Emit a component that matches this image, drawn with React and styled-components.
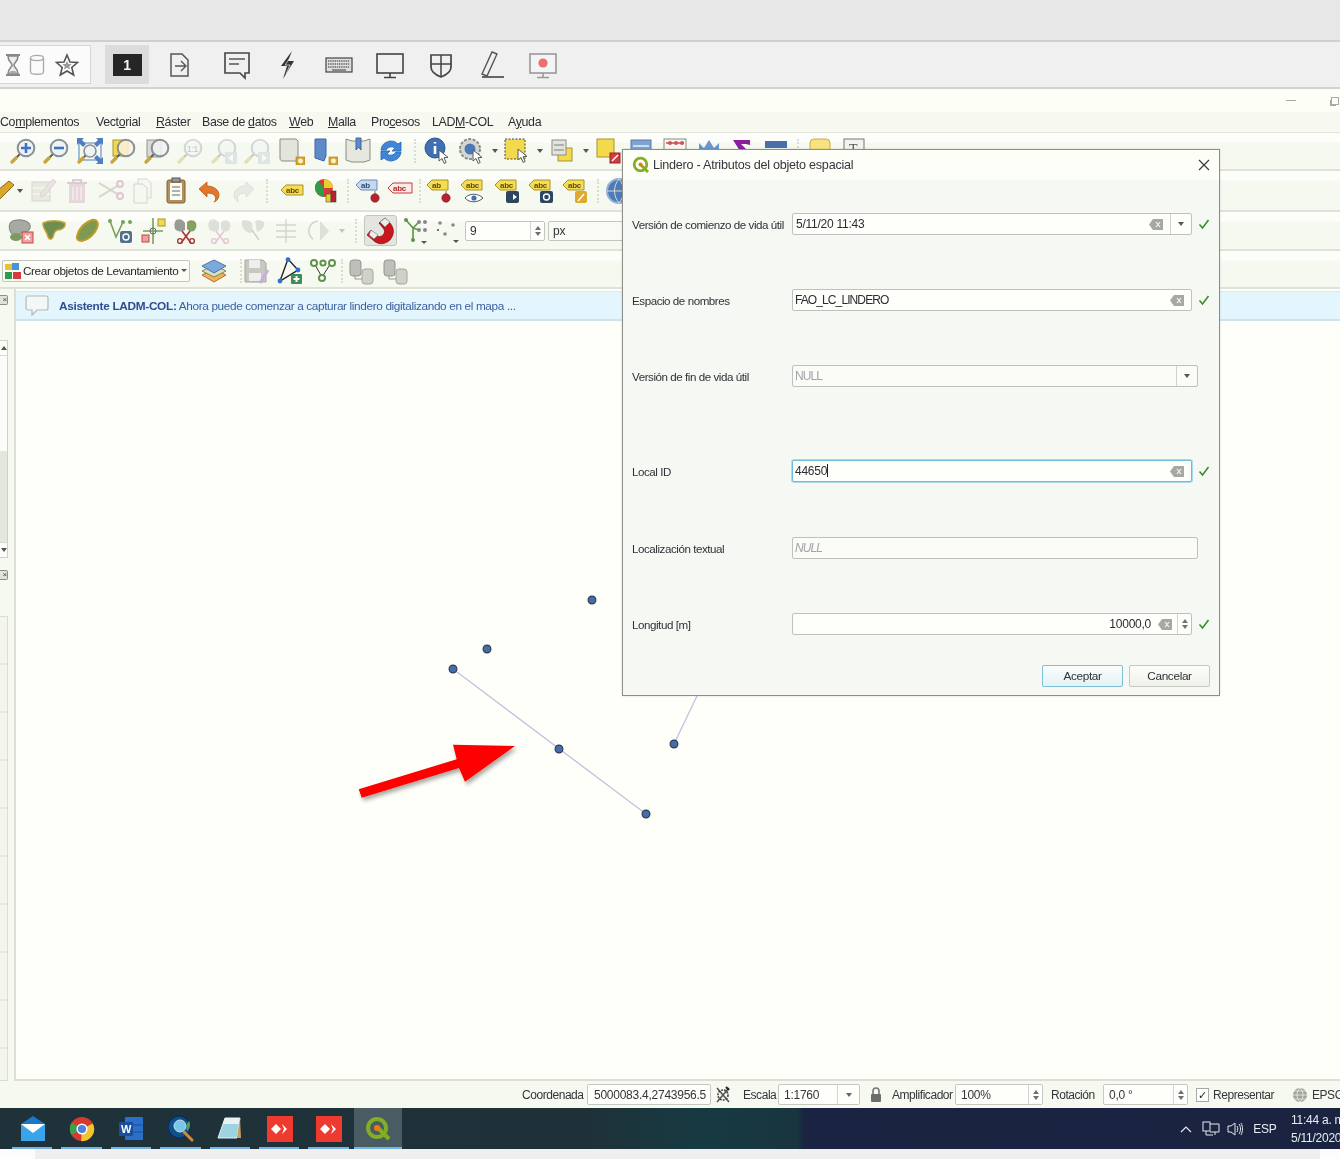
import React from "react";
import styled, { createGlobalStyle } from "styled-components";

const Global = createGlobalStyle`
  html, body { margin: 0; padding: 0; background: #f0f0f0; }
  #root { width: 1340px; height: 1159px; overflow: hidden; }
  * { box-sizing: border-box; }
`;
const FONT = `"Liberation Sans", Arial, sans-serif`;

const Page = styled.div`
  position: relative; width: 1340px; height: 1159px; overflow: hidden;
  display: flex; flex-direction: column; font-family: ${FONT}; font-size: 12px;
  letter-spacing: -0.25px; color: #33363a; background: #fdfef6; filter: blur(0.45px);
`;
const TopStrip = styled.div`height: 42px; flex: none; background: #e7e7e7; border-bottom: 2px solid #cfcfcf;`;
const RemoteBar = styled.div`
  height: 47px; flex: none; background: #f0f0f0; border-bottom: 2px solid #d2d2d2;
  display: flex; align-items: center;
`;
const RemoteGroup = styled.div`
  width: 91px; height: 39px; background: #fbfbfb; border: 1px solid #d6d6d6; border-left: 0;
  display: flex; align-items: center; padding-left: 1px; margin-right: 14px; flex: none;
`;
const ScreenButton = styled.div`
  width: 44px; height: 39px; background: #dcdcdc; flex: none; display: flex; align-items: center; justify-content: center;
`;
const ScreenNumber = styled.div`
  width: 29px; height: 22px; background: #262626; color: #f5f5f5; font: bold 14px ${FONT};
  display: flex; align-items: center; justify-content: center;
`;
const RemoteIcon = styled.div`
  width: ${p => p.$w}px; flex: none; display: flex; align-items: center; justify-content: center;
`;
const WindowBar = styled.div`
  height: 23px; flex: none; display: flex; justify-content: flex-end; align-items: center; color: #aaa; padding-right: 0;
`;
const MinButton = styled.div`width: 10px; height: 1px; background: #a8a8a8; margin-right: 35px;`;
const RestoreButton = styled.div`width: 8px; height: 8px; border: 1px solid #a8a8a8; margin-right: 1px; box-shadow: -2px 2px 0 -1px #a8a8a8;`;
const MenuBar = styled.div`
  height: 21px; flex: none; display: flex; align-items: center; background: #f7f9f0;
  border-bottom: 1px solid #e3e6dc; font-size: 12.4px; letter-spacing: -0.35px; color: #2c2f38;
`;
const MenuItem = styled.span`
  flex: none; width: ${p => p.$w}px; u { text-decoration-thickness: 1px; text-underline-offset: 1px; }
`;
const Toolbar = styled.div`
  height: ${p => p.$h}px; flex: none; display: flex; align-items: center; overflow: hidden;
  padding-left: ${p => p.$pad || 0}px; padding-top: ${p => p.$pt || 0}px;
  background: linear-gradient(#fdfef9 0, #fdfef9 9px, #f6f9f0 10px);
  border-bottom: 2px solid #dfe2d9;
`;
const Slot = styled.div`
  width: ${p => p.$w}px; height: 30px; flex: none; display: flex; align-items: center; justify-content: center;
  opacity: ${p => (p.$dim ? 0.32 : 1)};
`;
const Drop = styled.div`
  width: ${p => p.$w || 12}px; flex: none; display: flex; justify-content: center;
  &::after { content: ""; border-left: 3px solid transparent; border-right: 3px solid transparent; border-top: 4px solid ${p => (p.$dim ? "#c5c5c5" : "#555")}; }
`;
const Sep = styled.div`
  width: ${p => p.$w}px; height: 24px; flex: none; position: relative;
  &::after { content: ""; position: absolute; left: 45%; top: 0; bottom: 0; border-left: 2px dotted #d9dcd3; }
`;
const ActiveSlot = styled.div`
  width: 33px; height: 31px; flex: none; margin: 0 0; border: 1px solid #c4c7bf; border-radius: 3px; background: #e4e5df;
  display: flex; align-items: center; justify-content: center;
`;
const SpinBox = styled.div`
  height: 20px; width: ${p => p.$w}px; flex: none; background: #fefffa; border: 1px solid #c3c6bf; border-radius: 2px;
  display: flex; align-items: center; justify-content: space-between; padding-left: 4px; overflow: hidden; color: #30333a;
`;
const SpinArrows = styled.div`
  width: 14px; height: 100%; flex: none; border-left: 1px solid #d3d5ce; display: flex; flex-direction: column; align-items: center; justify-content: center; gap: 2px;
  &::before { content: ""; border-left: 3px solid transparent; border-right: 3px solid transparent; border-bottom: 4px solid #6e7072; }
  &::after { content: ""; border-left: 3px solid transparent; border-right: 3px solid transparent; border-top: 4px solid #6e7072; }
`;
const PlainField = styled.div`
  height: 20px; width: ${p => p.$w}px; margin-left: ${p => p.$ml || 0}px; flex: none; background: #f8faf3; border: 1px solid #c3c6bf; border-radius: 2px 0 0 2px; padding-left: 4px; display: flex; align-items: center;
`;
const LevantCombo = styled.div`
  width: 188px; height: 22px; margin-left: 2px; flex: none; border: 1px solid #c2c5bd; border-radius: 2px; background: #fbfcf6;
  display: flex; align-items: center; gap: 1px; padding-left: 1px; font-size: 11.8px; letter-spacing: -0.42px; color: #26282e; white-space: nowrap;
  &::after { content: ""; margin-left: 2px; border-left: 3px solid transparent; border-right: 3px solid transparent; border-top: 3px solid #555; }
`;
const Workspace = styled.div`height: 792px; flex: none; position: relative; display: flex;`;
const LeftDock = styled.div`
  width: 16px; flex: none; background: #f6f9f0; border-right: 2px solid #dcdfd7; display: flex; flex-direction: column;
`;
const DockClose = styled.div`
  width: 8px; height: 10px; margin-top: ${p => p.$mt}px; border: 1px solid #8d8d8d; border-left: 0; border-radius: 0 2px 2px 0; background: #e1e1dd;
  flex: none; color: #444; font-size: 8px; line-height: 8px; text-align: right;
`;
const DockScroll = styled.div`
  width: 8px; height: 218px; margin-top: 35px; flex: none; border: 1px solid #cfd2ca; border-left: 0; display: flex; flex-direction: column; background: #fcfdf8;
`;
const ScrollEnd = styled.div`
  height: 14px; flex: none; display: flex; align-items: center; justify-content: center;
  &::after { content: ""; border-left: 3px solid transparent; border-right: 3px solid transparent;
    ${p => (p.$up ? "border-bottom: 4px solid #555;" : "border-top: 4px solid #555;")} }
`;
const ScrollTrack = styled.div`flex: 1; border-top: 1px solid #d5d7d0; border-bottom: 1px solid #d5d7d0; display: flex; flex-direction: column;`;
const ScrollThumb = styled.div`flex: 1; background: #e4e6e0; margin-top: 95px;`;
const DockLower = styled.div`
  width: 8px; flex: 1; margin: 36px 0 0 0; border: 1px solid #dadcd5; border-left: 0;
  background: repeating-linear-gradient(#f3f5ee 0 46px, #e6e8e1 46px 48px);
`;
const MainCol = styled.div`flex: 1; display: flex; flex-direction: column; min-width: 0;`;
const MessageBar = styled.div`
  height: 30px; margin-top: 2px; flex: none; background: #e4f6fd; border-bottom: 2px solid #cfe3ea; border-top: 1px solid #d8ebf2;
  display: flex; align-items: center; padding-left: 9px; gap: 10px; font-size: 11.8px; letter-spacing: -0.36px; color: #3d5f9f;
`;
const Strong = styled.strong`color: #2e4c8f; letter-spacing: -0.3px;`;
const MapCanvas = styled.div`flex: 1; background: #fefff9; border-bottom: 2px solid #dcdfd7;`;
const MapOverlay = styled.svg`position: absolute; left: 0; top: 0; pointer-events: none;`;
const StatusBar = styled.div`
  height: 27px; flex: none; background: #f6f9ef; display: flex; align-items: center; padding-left: 522px; white-space: nowrap; overflow: hidden; color: #33363a; letter-spacing: -0.45px;
`;
const StatusLabel = styled.span`flex: none; width: ${p => p.$w}px; margin-left: ${p => p.$ml || 0}px;`;
const StatusInput = styled.div`
  flex: none; width: ${p => p.$w}px; height: 21px; margin-left: ${p => p.$ml || 0}px; background: #fefffa; border: 1px solid #c6c9c1; border-radius: 2px; letter-spacing: -0.25px;
  display: flex; align-items: center; justify-content: space-between; padding-left: ${p => p.$pl || 5}px; overflow: hidden;
`;
const ComboEnd = styled.div`
  width: 22px; height: 100%; flex: none; border-left: 1px solid #d3d5ce; display: flex; align-items: center; justify-content: center;
  &::after { content: ""; border-left: 3.5px solid transparent; border-right: 3.5px solid transparent; border-top: 4px solid #666; }
`;
const StatusIcon = styled.div`flex: none; width: ${p => p.$w}px; margin-left: ${p => p.$ml || 0}px; display: flex; justify-content: center;`;
const CheckBox = styled.div`
  flex: none; width: 13px; height: 14px; margin-left: 8px; margin-right: 4px; background: #fefffa; border: 1px solid #a8aaa5; color: #222; font-size: 11px; line-height: 12px; text-align: center;
`;
const Taskbar = styled.div`
  height: 41px; flex: none; display: flex; align-items: stretch; padding-left: 8px; color: #e8edf2; position: relative;
  background: linear-gradient(90deg, #203239 0, #1f3138 44%, #173a42 52%, #183540 59.5%, #1a2442 60%, #1a2340 100%);
`;
const TaskButton = styled.div`
  width: ${p => p.$w || 49.4}px; flex: none; display: flex; align-items: center; justify-content: center; position: relative;
  background: ${p => (p.$active ? "#4a5c63" : "transparent")};
  &::after { content: ""; position: absolute; left: ${p => (p.$active ? 0 : 4)}px; right: ${p => (p.$active ? 0 : 5)}px; bottom: 0; height: 2px; background: #74b3e3; }
`;
const Tray = styled.div`
  margin-left: auto; display: flex; align-items: center; gap: 0; flex: none;
`;
const TrayItem = styled.div`width: ${p => p.$w}px; flex: none; display: flex; justify-content: center;`;
const Clock = styled.div`width: 49px; margin-left: 7px; flex: none; line-height: 18px; font-size: 12px; white-space: nowrap; overflow: hidden; text-align: left;`;
const BottomStrip = styled.div`
  flex: 1; background: #efefef; display: flex; justify-content: space-between;
`;
const StripWhite = styled.div`width: ${p => p.$w}px; background: #fcfcfc;`;

/* dialog */
const Dialog = styled.div`
  position: absolute; left: 622px; top: 149px; width: 598px; height: 547px;
  background: #f6f9f3; border: 1.5px solid #8b8f88; box-shadow: 0 0 2px rgba(0,0,0,.15);
  display: flex; flex-direction: column;
`;
const DialogTitle = styled.div`
  height: 30px; flex: none; background: #fdfef8; display: flex; align-items: center; padding: 0 9px; gap: 3px; font-size: 12.6px; color: #33363c;
`;
const TitleText = styled.span`flex: 1;`;
const CloseX = styled.div`width: 14px; height: 14px; flex: none; display: flex; margin-right: -1px;`;
const DialogBody = styled.div`flex: 1; padding: 33px 9px 0 9px; display: flex; flex-direction: column;`;
const Row = styled.div`
  display: flex; align-items: center; height: 22px; flex: none; margin-top: ${p => p.$mt || 0}px;
`;
const Label = styled.label`width: 160px; flex: none; color: #2f3238; font-size: 11.6px; letter-spacing: -0.45px; white-space: nowrap; padding-top: 1px;`;
const Field = styled.div`
  width: ${p => p.$w}px; height: 22px; flex: none; background: ${p => (p.$off ? "#fbfcf6" : "#fefffa")};
  border: 1px solid ${p => (p.$focus ? "#6fbcd8" : "#bfc2ba")}; border-radius: 2px; display: flex; align-items: center;
  padding-left: ${p => p.$pl || 2}px; color: ${p => (p.$off ? "#a0a3ad" : "#2a2d33")}; font-size: 12px;
  box-shadow: ${p => (p.$focus ? "0 0 0 1px #a9dcec" : "none")};
`;
const FieldValue = styled.span`
  flex: 1; text-align: ${p => (p.$right ? "right" : "left")}; font-style: ${p => (p.$italic ? "italic" : "normal")};
  letter-spacing: ${p => (p.$tight ? "-0.9px" : "inherit")};
  ${p => (p.$caret ? "& i { display:inline-block; width:1px; height:13px; background:#222; vertical-align:-2px; }" : "")}
`;
const ClearIcon = styled.div`width: 14px; height: 11px; flex: none; margin: 0 ${p => p.$mr || 7}px 0 ${p => p.$ml || 4}px; display: flex;`;
const FieldCombo = styled.div`
  width: ${p => p.$w || 21}px; height: 100%; flex: none; border-left: 1px solid #d0d2cb; display: flex; align-items: center; justify-content: center;
  &::after { content: ""; border-left: 3px solid transparent; border-right: 3px solid transparent; border-top: 4px solid #555; }
`;
const Check = styled.div`width: 12px; height: 12px; flex: none; margin-left: 6px; display: flex;`;
const DialogButtons = styled.div`
  display: flex; justify-content: flex-end; gap: 6px; margin-top: 30px; padding-right: 0;
`;
const DlgButton = styled.button`
  width: 81px; height: 22px; font: 11.8px ${FONT}; letter-spacing: -0.35px; color: #2f3238; border-radius: 2px; padding: 0;
  border: 1px solid ${p => (p.$primary ? "#7dbfd6" : "#c6c9c1")};
  background: ${p => (p.$primary ? "linear-gradient(#fbfdfb,#e3f2f6)" : "linear-gradient(#fdfef9,#eff1ea)")};
`;

/* ---------- drawings ---------- */
const Svg = ({ s = 28, w, h, vb = "0 0 28 28", children }) => (
  <svg width={w || s} height={h || s} viewBox={vb} fill="none" style={{ flex: "none", display: "block" }}>{children}</svg>
);
const Handle = () => (<>
  <path d="M12 16 5 23" stroke="#5c5c50" strokeWidth="2" />
  <path d="M7 21 3 25" stroke="#c8a63a" strokeWidth="3.4" strokeLinecap="round" />
</>);
const Lens = ({ fill = "#eef3f4", stroke = "#8a9098" }) => <circle cx="17" cy="11" r="8.3" fill={fill} stroke={stroke} strokeWidth="2" />;
const Gear = ({ x = 19, y = 20 }) => (
  <g><rect x={x} y={y} width="9" height="8" fill="#d9a72a" stroke="#a47a12" strokeWidth=".6" /><circle cx={x + 4.5} cy={y + 4} r="2.4" fill="#fff4c8" /></g>
);
const Cursor = ({ x = 0, y = 0, fill = "#fff" }) => (
  <path transform={`translate(${x} ${y})`} d="M0 0v11l3-2.5 2.2 5 2-1-2.2-4.8 4-.3z" fill={fill} stroke="#55595e" strokeWidth="1" />
);
const Tag = ({ x = 2, y = 5, w = 20, fill = "#f5dd4f", stroke = "#a8932c", text = "abc", color = "#5a4a10" }) => (
  <g>
    <path d={`M${x} ${y + 5} l5-5 h${w - 5} v10 h-${w - 5} z`} fill={fill} stroke={stroke} strokeWidth="1" />
    <text x={x + 5} y={y + 8} fontFamily="Liberation Sans" fontSize="8" fontWeight="bold" fill={color}>{text}</text>
  </g>
);
const Pin = ({ x = 21, y = 19 }) => (<g><path d={`M${x} ${y - 7}v5`} stroke="#777" /><circle cx={x} cy={y} r="4.2" fill="#b82330" stroke="#7a1520" strokeWidth=".6" /></g>);

const icons = {
  zoomIn: <Svg><Handle /><Lens /><path d="M17 6v10M12 11h10" stroke="#3f72c4" strokeWidth="2.6" /></Svg>,
  zoomOut: <Svg><Handle /><Lens /><path d="M12 11h10" stroke="#3f72c4" strokeWidth="2.6" /></Svg>,
  zoomFull: <Svg><path d="M1 1h7L6 3l4 4-3 3-4-4-2 2zM27 1v7l-2-2-4 4-3-3 4-4-2-2zM27 27h-7l2-2-4-4 3-3 4 4 2-2z" fill="#4c7fc0" /><path d="M3 6h22v17H3z" stroke="#4c7fc0" strokeWidth="1" /><Handle /><circle cx="14" cy="14" r="6" fill="#eef3f4" stroke="#8a9098" strokeWidth="1.6" /></Svg>,
  zoomSel: <Svg><rect x="4" y="3" width="15" height="16" fill="#f3da4d" stroke="#a8932c" /><Handle /><Lens fill="rgba(250,240,225,.85)" /></Svg>,
  zoomLayer: <Svg><rect x="4" y="3" width="14" height="17" fill="#d9dbd3" stroke="#93958e" /><Handle /><Lens fill="rgba(240,243,243,.85)" /></Svg>,
  zoom11: <Svg><Handle /><Lens /><text x="11" y="14.5" fontFamily="Liberation Sans" fontSize="8.5" fill="#555">1:1</text></Svg>,
  zoomLast: <Svg><Handle /><Lens /><rect x="15" y="15" width="12" height="12" fill="#a9bcd0" /><path d="M23 17v8l-5-4z" fill="#fff" /></Svg>,
  zoomNext: <Svg><Handle /><Lens /><rect x="15" y="15" width="12" height="12" fill="#a9bcd0" /><path d="M19 17v8l5-4z" fill="#fff" /></Svg>,
  newMap: <Svg><path d="M3 2h16l2 2v20H6c-2 0-3-1-3-3z" fill="#e3e4db" stroke="#8b8c84" /><Gear /></Svg>,
  newBookmark: <Svg><path d="M5 2h11v17l-2 5-9-3z" fill="#5e8ac8" stroke="#3e66a5" /><Gear /></Svg>,
  bookmarks: <Svg><path d="M2 2l6 2h12l6-2v21l-6 2H8l-6-2z" fill="#e6e7df" stroke="#8b8c84" /><path d="M12 1h5v12l-2.5-3L12 13z" fill="#5e8ac8" stroke="#3e66a5" /></Svg>,
  refresh: <Svg><path d="M4 13a10 10 0 0 1 17-6l3-2v9h-9l3-3a6 6 0 0 0-9 2z" fill="#3f86d8" stroke="#2463ac" strokeWidth=".8" /><path d="M24 15a10 10 0 0 1-17 6l-3 2v-9h9l-3 3a6 6 0 0 0 9-2z" fill="#3f86d8" stroke="#2463ac" strokeWidth=".8" /></Svg>,
  identify: <Svg><circle cx="11" cy="11" r="10" fill="#3f6fb4" stroke="#2d548e" /><path d="M11 5v1.5M11 9v8" stroke="#fff" strokeWidth="2.6" /><Cursor x={15} y={13} /></Svg>,
  action: <Svg><circle cx="12" cy="12" r="10" fill="#d5d7d2" stroke="#8a8c88" strokeDasharray="3 1.5" strokeWidth="2" /><circle cx="12" cy="12" r="5.5" fill="#4d78b4" /><Cursor x={15} y={13} /></Svg>,
  selectRect: <Svg><rect x="2" y="2" width="20" height="20" fill="#f3da4d" stroke="#444" strokeDasharray="2 1.5" /><Cursor x={15} y={12} /></Svg>,
  selectAttr: <Svg><rect x="9" y="11" width="14" height="13" fill="#f3da4d" stroke="#a8932c" /><rect x="3" y="3" width="14" height="15" fill="#e3e5dd" stroke="#8b8c84" /><path d="M5 8h10M5 13h10" stroke="#9ca0a0" strokeWidth="1.6" /></Svg>,
  deselect: <Svg><rect x="3" y="2" width="17" height="18" fill="#f3da4d" stroke="#a8932c" /><rect x="16" y="16" width="10" height="10" fill="#d43c3c" stroke="#992222" /><path d="M18 24l6-6" stroke="#fff" strokeWidth="1.5" /></Svg>,
  table: <Svg><rect x="4" y="3" width="20" height="22" fill="#7fa3d0" stroke="#567cae" /><path d="M6 9h16M6 14h16M6 19h16" stroke="#e8eff7" strokeWidth="1.4" /></Svg>,
  graph: <Svg><rect x="3" y="2" width="22" height="24" fill="#f7f7f0" stroke="#888" /><path d="M5 6h18" stroke="#b44" strokeWidth="1.4" /><circle cx="9" cy="6" r="2" fill="#c55" /><circle cx="15" cy="6" r="2" fill="#c55" /><circle cx="21" cy="6" r="2" fill="#c55" /></Svg>,
  crown: <Svg><path d="M4 20V6l5 5 5-8 5 8 5-5v14z" fill="#6b95cc" /></Svg>,
  sigma: <Svg><path d="M5 3h17v5l-4-1H13l6 6-6 7h5l4-1v5H5l7-10z" fill="#8a1e9e" /></Svg>,
  ruler: <Svg><rect x="3" y="4" width="22" height="7" fill="#4a6ea8" /></Svg>,
  note: <Svg><rect x="4" y="2" width="20" height="20" rx="4" fill="#f8e27f" stroke="#c6ad4c" /></Svg>,
  textBox: <Svg><rect x="4" y="2" width="20" height="22" fill="#f2f3ee" stroke="#777" /><text x="9" y="17" fontFamily="Liberation Serif" fontSize="14" fill="#555">T</text></Svg>,
  pencilCut: <Svg><path d="M-6 22 16 4l5 4L3 26z" fill="#d9a72a" stroke="#8d6b15" /></Svg>,
  editTable: <Svg><rect x="3" y="5" width="18" height="19" fill="#c9ccbe" stroke="#8e9087" /><path d="M3 11h18M3 17h18" stroke="#fff" /><path d="M24 2l3 3-12 14-4 1 1-4z" fill="#d8b0c8" stroke="#a67f97" /></Svg>,
  trash: <Svg><path d="M4 6h20M10 6V3h8v3" stroke="#a46c94" strokeWidth="2" /><path d="M6 7h16v19H6z" fill="#c493b5" /><path d="M10 10v13M14 10v13M18 10v13" stroke="#f0dce9" strokeWidth="1.4" /></Svg>,
  cut: <Svg><path d="M3 6l20 12M3 20 23 8" stroke="#888" strokeWidth="2" /><circle cx="24" cy="7" r="3" stroke="#b85a94" strokeWidth="2" /><circle cx="24" cy="19" r="3" stroke="#b85a94" strokeWidth="2" /></Svg>,
  copy: <Svg><path d="M9 2h9l4 4v15H9z" fill="#f5f6f0" stroke="#888" /><path d="M5 7h9l4 4v15H5z" fill="#f5f6f0" stroke="#888" /></Svg>,
  paste: <Svg><rect x="5" y="3" width="18" height="23" rx="2" fill="#b48f5e" stroke="#7e6138" /><rect x="8" y="6" width="12" height="17" fill="#fbfbf6" /><path d="M10 10h8M10 14h8M10 18h8" stroke="#666" /><rect x="10" y="1" width="8" height="4" fill="#999" stroke="#555" /></Svg>,
  undo: <Svg><path d="M3 12l8-7v4c7 0 12 4 12 9 0 3-2 6-5 7 2-2 2-4 1-6-1-2-4-3-8-3v4z" fill="#e2762a" stroke="#b55a18" strokeWidth=".8" /></Svg>,
  redo: <Svg><path d="M25 12l-8-7v4C10 9 5 13 5 18c0 3 2 6 5 7-2-2-2-4-1-6 1-2 4-3 8-3v4z" fill="#c6ccc6" stroke="#9aa29c" strokeWidth=".8" /></Svg>,
  label: <Svg><Tag x={3} y={8} w={22} /></Svg>,
  pie: <Svg><circle cx="12" cy="11" r="9" fill="#d43c3c" /><path d="M12 11V2a9 9 0 0 1 9 9z" fill="#e9cf2e" /><path d="M12 11v9a9 9 0 0 1-9-9 9 9 0 0 1 3-7z" fill="#2e9a4a" /><rect x="14" y="17" width="5" height="8" fill="#e9cf2e" stroke="#333" strokeWidth=".5" /><rect x="19" y="14" width="5" height="11" fill="#b82330" stroke="#333" strokeWidth=".5" /></Svg>,
  labelBlue: <Svg><Tag x={2} y={3} w={21} fill="#c5d8ee" stroke="#6d8cb8" text="ab" color="#2f4a72" /><Pin x={21} y={21} /></Svg>,
  labelRed: <Svg><Tag x={2} y={6} w={24} fill="#fdeaea" stroke="#c63a3a" color="#b52a2a" /></Svg>,
  labelPin: <Svg><Tag x={2} y={3} w={21} text="ab" /><Pin x={21} y={21} /></Svg>,
  labelEye: <Svg><Tag x={2} y={3} w={21} /><path d="M6 21c4-5 13-5 18 0-5 5-14 5-18 0z" fill="#fff" stroke="#555" /><circle cx="15" cy="21" r="2.6" fill="#3f6fb4" /></Svg>,
  labelMove: <Svg><Tag x={2} y={3} w={21} /><rect x="13" y="14" width="13" height="12" rx="2" fill="#2c4660" /><path d="M15 20h5v-3l4 3-4 3v-3" fill="#fff" /></Svg>,
  labelRotate: <Svg><Tag x={2} y={3} w={21} /><rect x="13" y="14" width="13" height="12" rx="2" fill="#2c4660" /><circle cx="19.5" cy="20" r="3" stroke="#fff" strokeWidth="1.4" /></Svg>,
  labelEdit: <Svg><Tag x={2} y={3} w={21} /><rect x="14" y="14" width="12" height="12" rx="2" fill="#e0a92a" /><path d="M17 24l6-7" stroke="#fff" strokeWidth="1.6" /></Svg>,
  globe: <Svg><circle cx="14" cy="14" r="12" fill="#4d7bb8" stroke="#8fb0d8" strokeWidth="2" /><path d="M14 2c-6 7-6 17 0 24M14 2c6 7 6 17 0 24M2 14h24" stroke="#d8d8d8" /></Svg>,
  delRing: <Svg><path d="M4 5c4-3 14-3 18 1 3 4 0 9-4 9s-7 6-12 3C2 15 1 8 4 5z" fill="#a7aaa0" stroke="#7e8079" /><ellipse cx="9" cy="20" rx="6" ry="4" fill="#7e9a63" /><rect x="15" y="15" width="11" height="11" fill="#e8a0a0" stroke="#c44" /><path d="M18 18l5 5M23 18l-5 5" stroke="#fff" strokeWidth="1.6" /></Svg>,
  reshape: <Svg><path d="M3 6c6-3 16-3 22 0 1 4-3 7-7 7-3 0-4 3-5 7-1 3-4 3-5 0-1-6-6-9-5-14z" fill="#6f8f50" stroke="#c8a63a" strokeWidth="1.4" /></Svg>,
  offset: <Svg><path d="M4 19C6 11 12 5 19 3c5-1 7 3 5 8-3 7-9 12-15 13-4 0-6-2-5-5z" fill="#7e9a50" stroke="#c39b25" strokeWidth="2" /></Svg>,
  vertex: <Svg><path d="M4 4l6 16 7-15" stroke="#77a05a" strokeWidth="1.6" /><circle cx="4" cy="4" r="2" fill="#77a05a" /><circle cx="17" cy="5" r="2" fill="#77a05a" /><circle cx="24" cy="5" r="2" fill="#77a05a" /><rect x="14" y="14" width="12" height="12" rx="2" fill="#54708c" /><circle cx="20" cy="20" r="3" stroke="#fff" strokeWidth="1.4" /></Svg>,
  split: <Svg><path d="M14 1v26M4 14h20" stroke="#77a05a" strokeWidth="1.6" /><circle cx="14" cy="14" r="3" stroke="#666" /><rect x="19" y="2" width="7" height="7" fill="#f3da4d" stroke="#a8932c" /><rect x="3" y="18" width="7" height="7" fill="#e8a0a0" stroke="#c44" /></Svg>,
  scissors: <Svg><path d="M4 3c4-2 7 0 9 3v7c-3 2-8 2-10-1-1-3-1-6 1-9z" fill="#9a9b95" /><path d="M15 5c3-3 8-2 9 1 1 3 0 6-2 8-3 1-5 0-7-2z" fill="#86a05e" /><path d="M9 26l9-12M19 26l-9-12" stroke="#a33" strokeWidth="1.6" /><circle cx="8" cy="24" r="2.4" stroke="#a33" strokeWidth="1.4" /><circle cx="20" cy="24" r="2.4" stroke="#a33" strokeWidth="1.4" /></Svg>,
  scissorsPink: <Svg><path d="M4 3c4-2 7 0 9 3v7c-3 2-8 2-10-1-1-3-1-6 1-9z" fill="#aaa" /><path d="M15 5c3-3 8-2 9 1 1 3 0 6-2 8-3 1-5 0-7-2z" fill="#aaa" /><path d="M9 26l9-12M19 26l-9-12" stroke="#c060a0" strokeWidth="1.6" /><circle cx="8" cy="24" r="2.4" stroke="#c060a0" strokeWidth="1.4" /><circle cx="20" cy="24" r="2.4" stroke="#c060a0" strokeWidth="1.4" /></Svg>,
  merge: <Svg><path d="M3 4c3-2 7-1 10 2l1 9-3 1C6 15 2 11 3 4zM16 4c3-2 7-1 9 1 1 5-3 9-7 10z" fill="#aaa" /><path d="M13 13l7 10" stroke="#777" strokeWidth="1.4" /></Svg>,
  rows: <Svg><path d="M14 2v24M4 8h20M4 14h20M4 20h20" stroke="#888" strokeWidth="1.4" /></Svg>,
  rotate: <Svg><path d="M14 4v20l9-10z" fill="#aaa" /><path d="M12 4a10 10 0 0 0-5 18" stroke="#888" strokeWidth="1.6" /></Svg>,
  magnet: <Svg><path d="M4 13l5 5c2 2 5 2 7 0 2-2 2-5 0-7l-4-5 6-5 5 5c5 6 4 12 0 17-6 5-12 5-17 0l-6-5z" fill="#c9171e" stroke="#7d0d12" strokeWidth=".7" /><path d="M4 13l-2 5 5 4 4-4zM18 1l-5 4 5 5 5-5z" fill="#ececec" stroke="#777" strokeWidth=".6" /></Svg>,
  vertexTree: <Svg><path d="M5 3l7 8 6-6M12 11l6 2M12 11v12" stroke="#5f9448" strokeWidth="1.6" /><circle cx="5" cy="3" r="2" fill="#5f9448" /><circle cx="18" cy="5" r="2" fill="#888" /><circle cx="24" cy="5" r="2" fill="#888" /><circle cx="18" cy="13" r="2" fill="#888" /><circle cx="24" cy="13" r="2" fill="#888" /><circle cx="12" cy="23" r="2" fill="#5f9448" /><path d="M20 24h6l-3 3z" fill="#555" /></Svg>,
  dots: <Svg><circle cx="5" cy="6" r="1.8" fill="#888" /><circle cx="18" cy="8" r="1.8" fill="#888" /><circle cx="10" cy="17" r="1.8" fill="#888" /><circle cx="3" cy="13" r=".9" fill="#333" /><path d="M18 23h6l-3 3z" fill="#555" /></Svg>,
  landUnit: <Svg s={18} vb="0 0 18 18"><rect x="1" y="2" width="7" height="6" fill="#e9c22e" /><rect x="8" y="1" width="7" height="7" fill="#3f96d8" /><rect x="1" y="10" width="7" height="7" fill="#2e9a4a" /><rect x="9" y="10" width="8" height="7" fill="#d43c3c" /></Svg>,
  layers: <Svg><path d="M14 12 26 18 14 25 2 18z" fill="#eeb45c" stroke="#c0683a" /><path d="M14 8 26 14 14 20 2 14z" fill="#e2dcc0" stroke="#6f8f50" /><path d="M14 3 26 9 14 16 2 9z" fill="#7ea9dc" stroke="#4a74ac" /></Svg>,
  save: <Svg><path d="M3 3h18l3 3v19H3z" fill="#c8c8c0" stroke="#a6a69e" /><rect x="7" y="3" width="11" height="8" fill="#eee" /><rect x="7" y="16" width="12" height="8" fill="#eee" /><path d="M26 13 18 26" stroke="#c4b0d8" strokeWidth="3" /></Svg>,
  polygonAdd: <Svg><path d="M12 2 4 24l18-11z" stroke="#222" strokeWidth="1.4" /><circle cx="12" cy="2.6" r="2.4" fill="#2e6fd8" /><circle cx="4" cy="24" r="2.4" fill="#2e6fd8" /><circle cx="22" cy="13" r="2.4" fill="#2e6fd8" /><rect x="15" y="17" width="11" height="10" rx="1" fill="#3f8d58" /><path d="M20.5 19v6M17.5 22h6" stroke="#fff" strokeWidth="2" /></Svg>,
  nodes: <Svg><path d="M5 6l8 14 9-14" stroke="#333" /><circle cx="5" cy="6" r="3" stroke="#5e9448" strokeWidth="2" fill="#fff" /><circle cx="14" cy="6" r="2.6" stroke="#5e9448" strokeWidth="2" fill="#fff" /><circle cx="23" cy="6" r="3" stroke="#5e9448" strokeWidth="2" fill="#fff" /><circle cx="13" cy="21" r="3" stroke="#5e9448" strokeWidth="2" fill="#fff" /></Svg>,
  dbLink: <Svg><rect x="2" y="3" width="11" height="16" rx="3" fill="#bdbfb8" stroke="#94968f" /><rect x="14" y="12" width="11" height="15" rx="3" fill="#cfd1ca" stroke="#a4a69f" /><path d="M7 19v3h7" stroke="#94968f" /></Svg>,
};

const Icon = ({ n, w = 33.5, dim }) => <Slot $w={w} $dim={dim}>{icons[n]}</Slot>;

const Remote = {
  hourglass: <Svg s={24} vb="0 0 24 24"><path d="M5 2h14M5 22h14" stroke="#888" strokeWidth="2" /><path d="M7 3c0 6 4 6 4 9s-4 3-4 9h10c0-6-4-6-4-9s4-3 4-9z" fill="#ededed" stroke="#888" strokeWidth="1.6" /><path d="M8 20c1-3 7-3 8 0z" fill="#aaa" /></Svg>,
  cylinder: <Svg s={24} vb="0 0 24 24"><ellipse cx="12" cy="5" rx="6.5" ry="2.6" stroke="#aaa" strokeWidth="1.3" /><path d="M5.5 5v14c0 3 13 3 13 0V5" stroke="#aaa" strokeWidth="1.3" /></Svg>,
  star: <Svg s={24} vb="0 0 24 24"><path d="m12 2 3 7 7.5.5-5.7 5 1.9 7.5-6.7-4-6.7 4 1.9-7.5-5.7-5L9 9z" stroke="#555" strokeWidth="1.6" /><path d="m12 8 1.5 3 3.2.3-2.5 2 .8 3.2-3-1.7-3 1.7.8-3.2-2.5-2 3.2-.3z" fill="#999" /></Svg>,
  file: <Svg s={28}><path d="M6 3h11l6 6v16H6z" stroke="#555" strokeWidth="1.5" /><path d="M10 15h10M16 10l5 5-5 5" stroke="#555" strokeWidth="1.4" /></Svg>,
  chat: <Svg s={30} vb="0 0 30 30"><path d="M3 3h24v20h-4v5l-5-5H3z" stroke="#444" strokeWidth="1.6" /><path d="M7 9h16M7 14h10" stroke="#555" strokeWidth="1.6" /></Svg>,
  bolt: <Svg s={30} vb="0 0 30 30"><path d="M19 1 8 16h6l-4 13 11-18h-6z" fill="#333" /><path d="M19 5 12 15h5l-4 9" stroke="#f0f0f0" strokeWidth=".7" /></Svg>,
  keyboard: <Svg s={30} vb="0 0 30 30"><rect x="2" y="8" width="26" height="14" fill="#dfdfdf" stroke="#444" strokeWidth="1.2" /><path d="M4 11h22M4 14h22M4 17h22" stroke="#666" strokeWidth="1.4" strokeDasharray="1.4 .8" /><path d="M8 20h14" stroke="#666" strokeWidth="1.4" /></Svg>,
  monitor: <Svg s={30} vb="0 0 30 30"><rect x="2" y="4" width="26" height="19" stroke="#444" strokeWidth="1.6" /><path d="M15 23v4M9 27.5h12" stroke="#444" strokeWidth="1.6" /></Svg>,
  shield: <Svg s={28}><path d="M4 4h20v12c0 5-5 8-10 10C9 24 4 21 4 16z" stroke="#444" strokeWidth="1.7" /><path d="M14 4v22M4 13h20" stroke="#444" strokeWidth="1.5" /></Svg>,
  pen: <Svg s={30} vb="0 0 30 30"><path d="M15 2l5 2-10 22-5-2z" stroke="#555" strokeWidth="1.4" /><path d="M5 27h22" stroke="#555" strokeWidth="1.8" /></Svg>,
  record: <Svg s={30} vb="0 0 30 30"><rect x="2" y="4" width="26" height="19" fill="#f4f4f4" stroke="#999" strokeWidth="1.6" /><circle cx="15" cy="13" r="4.6" fill="#ec6e6e" /><path d="M15 23v4M9 27.5h12" stroke="#999" strokeWidth="1.6" /></Svg>,
};

const Task = {
  mail: <Svg s={28}><path d="M2 9 14 1l12 8v17H2z" fill="#1b78c8" /><path d="M2 9h24v17H2z" fill="#3aa4ea" /><path d="M2 9l12 9 12-9z" fill="#fff" /></Svg>,
  chrome: <Svg s={26} vb="0 0 28 28"><circle cx="14" cy="14" r="13" fill="#d8392f" /><path d="M14 14 2.7 20.5A13 13 0 0 1 3 7z" fill="#3aa24e" /><path d="M14 14l11.6-6A13 13 0 0 1 13 27z" fill="#f4c430" /><circle cx="14" cy="14" r="6" fill="#fff" /><circle cx="14" cy="14" r="4.4" fill="#4a84e0" /></Svg>,
  word: <Svg s={28}><rect x="8" y="2" width="18" height="23" rx="1" fill="#2b6fc9" /><path d="M8 10h18M8 17h18" stroke="#1c4e9a" /><rect x="2" y="7" width="14" height="14" rx="1" fill="#1a4fa0" /><text x="4" y="18" fontFamily="Liberation Sans" fontSize="11" fontWeight="bold" fill="#fff">W</text></Svg>,
  search: <Svg s={28}><circle cx="12" cy="12" r="11" fill="#0f4f8a" stroke="#0b2f58" strokeWidth="1.4" /><circle cx="13" cy="11" r="6" fill="#7cc4e8" stroke="#bfe3f5" /><path d="M22 6c2 3 1 8-2 10-1-3-1-7 2-10z" fill="#59a04c" /><path d="M17 17l8 8" stroke="#d28a3a" strokeWidth="3" strokeLinecap="round" /></Svg>,
  note: <Svg s={28}><path d="M9 3h15l-3 20H2z" fill="#9cd4e0" stroke="#e8f2f4" /><path d="M9 3h15l-1 6H7z" fill="#e8f2f4" /><path d="M21 23l3-20 1 20z" fill="#c8a060" /></Svg>,
  any: <Svg s={26} vb="0 0 26 26"><rect width="26" height="26" fill="#ef3b2f" /><path d="M9 8l5 5-5 5-5-5z" fill="#fff" /><path d="M15 8l5 5-5 5 2-5z" fill="#fff" /></Svg>,
  qgis: <Svg s={26} vb="0 0 26 26"><circle cx="12" cy="12" r="9" stroke="#83ad24" strokeWidth="4" /><path d="M12 11l4 4 8 8" stroke="#83ad24" strokeWidth="4" /><circle cx="12" cy="12" r="3" fill="#ee7913" /></Svg>,
};

const Clear = ({ ml, mr }) => (
  <ClearIcon $ml={ml} $mr={mr}><svg width="14" height="11" viewBox="0 0 14 11"><path d="M4 0h10v11H4L0 5.5z" fill="#a5a8a3" /><path d="M7 3l4 5M11 3 7 8" stroke="#f6f8f2" strokeWidth="1.2" /></svg></ClearIcon>
);
const Ok = () => (
  <Check><svg width="12" height="12" viewBox="0 0 12 12"><path d="M1.5 6.5 4.5 10 10.5 2" stroke="#3c8c2c" strokeWidth="1.6" fill="none" /></svg></Check>
);

const menu = [
  [96, <>Co<u>m</u>plementos</>], [60, <>Vect<u>o</u>rial</>], [46, <><u>R</u>áster</>], [87, <>Base de <u>d</u>atos</>],
  [39, <><u>W</u>eb</>], [43, <><u>M</u>alla</>], [61, <>Pro<u>c</u>esos</>], [76, <>LAD<u>M</u>-COL</>], [50, <>A<u>y</u>uda</>],
];
const Seq = (list) => list.map((it, i) => {
  if (it === "|") return <Sep key={i} $w={13.5} />;
  if (typeof it === "number") return <Sep key={i} $w={it} />;
  if (it === "v") return <Drop key={i} />;
  if (it === "vd") return <Drop key={i} $dim />;
  const [n, w, dim] = it.split(":");
  return <Icon key={i} n={n} w={w ? +w : undefined} dim={dim === "d"} />;
});

const points = [[592, 600], [487, 649], [453, 669], [559, 749], [646, 814], [674, 744]];

export default function App() {
  return (
    <Page>
      <Global />
      <TopStrip />
      <RemoteBar>
        <RemoteGroup>
          <RemoteIcon $w={23}>{Remote.hourglass}</RemoteIcon>
          <RemoteIcon $w={25}>{Remote.cylinder}</RemoteIcon>
          <RemoteIcon $w={36}>{Remote.star}</RemoteIcon>
        </RemoteGroup>
        <ScreenButton><ScreenNumber>1</ScreenNumber></ScreenButton>
        <RemoteIcon $w={60}>{Remote.file}</RemoteIcon>
        <RemoteIcon $w={56}>{Remote.chat}</RemoteIcon>
        <RemoteIcon $w={46}>{Remote.bolt}</RemoteIcon>
        <RemoteIcon $w={56}>{Remote.keyboard}</RemoteIcon>
        <RemoteIcon $w={46}>{Remote.monitor}</RemoteIcon>
        <RemoteIcon $w={56}>{Remote.shield}</RemoteIcon>
        <RemoteIcon $w={46}>{Remote.pen}</RemoteIcon>
        <RemoteIcon $w={56}>{Remote.record}</RemoteIcon>
      </RemoteBar>
      <WindowBar><MinButton /><RestoreButton /></WindowBar>
      <MenuBar>{menu.map(([w, t], i) => <MenuItem key={i} $w={w}>{t}</MenuItem>)}</MenuBar>

      <Toolbar $h={38} $pad={6}>
        {Seq(["zoomIn", "zoomOut", "zoomFull", "zoomSel", "zoomLayer", "zoom11::d", "zoomLast::d", "zoomNext::d", "newMap", "newBookmark", "bookmarks", "refresh",
          "|", "identify", "action", "v", "selectRect", "v", "selectAttr", "v", "deselect:33", "table:33", "graph:35", "crown:33", "sigma:33", "ruler:34", 10, "note:34", "textBox:34"])}
      </Toolbar>
      <Toolbar $h={41}>
        <Icon n="pencilCut" w={14} />
        {Seq(["v", "editTable:34:d", "trash:33:d", "cut:33:d", "copy:33:d", "paste:34", "undo:33", "redo:33:d", 16, "label:34", "pie:34", 8, "labelBlue:33", "labelRed:32", 6, "labelPin:34", "labelEye:34", "labelMove:34", "labelRotate:34", "labelEdit:33", 13, "globe:30"])}
      </Toolbar>
      <Toolbar $h={39} $pad={4}>
        {Seq(["delRing:33", "reshape:33", "offset:33", "vertex:34", "split:32", "scissors:34", "scissorsPink:33:d", "merge:33:d", "rows:34:d", "rotate:33:d", "vd", 16])}
        <ActiveSlot>{icons.magnet}</ActiveSlot>
        <Icon n="vertexTree" w={36} />
        <Icon n="dots" w={32} />
        <SpinBox $w={80}>9<SpinArrows /></SpinBox>
        <PlainField $w={90} $ml={3}>px</PlainField>
      </Toolbar>
      <Toolbar $h={38} $pt={3}>
        <LevantCombo>{icons.landUnit}Crear objetos de Levantamiento</LevantCombo>
        <Icon n="layers" w={48} />
        <Sep $w={4} />
        <Icon n="save" w={27} />
        <Icon n="polygonAdd" w={41} />
        <Icon n="nodes" w={26} />
        <Sep $w={10} />
        <Icon n="dbLink" w={32} />
        <Icon n="dbLink" w={36} />
      </Toolbar>

      <Workspace>
        <LeftDock>
          <DockClose $mt={6}>×</DockClose>
          <DockScroll>
            <ScrollEnd $up />
            <ScrollTrack><ScrollThumb /></ScrollTrack>
            <ScrollEnd />
          </DockScroll>
          <DockClose $mt={12}>×</DockClose>
          <DockLower />
        </LeftDock>
        <MainCol>
          <MessageBar>
            <svg width="24" height="22" viewBox="0 0 24 22" fill="none"><path d="M3 1h18c1 0 2 1 2 2v10c0 1-1 2-2 2H12l-5 5v-5H3c-1 0-2-1-2-2V3c0-1 1-2 2-2z" fill="#f3f7f6" stroke="#b4b9b8" strokeWidth="1.2" /></svg>
            <span><Strong>Asistente LADM-COL:</Strong> Ahora puede comenzar a capturar lindero digitalizando en el mapa ...</span>
          </MessageBar>
          <MapCanvas />
        </MainCol>
        <MapOverlay width="1340" height="792" viewBox="0 289 1340 792">
          <defs>
            <filter id="arrowShadow" x="-10%" y="-10%" width="125%" height="135%">
              <feDropShadow dx="2" dy="3" stdDeviation="2" floodColor="#000" floodOpacity=".35" />
            </filter>
          </defs>
          <path d="M453 669 646 814M674 744 697 696" stroke="#c4c4e2" strokeWidth="1.4" />
          {points.map(([x, y]) => <circle key={x} cx={x} cy={y} r="3.9" fill="#466da6" stroke="#2e3d55" strokeWidth="1.2" />)}
          <polygon points="358.7,789.3 361.7,797.7 459,768 465,781.7 515,746 453,744.7 456.7,759.3" fill="#fe0000" filter="url(#arrowShadow)" />
        </MapOverlay>
      </Workspace>

      <StatusBar>
        <StatusLabel $w={65}>Coordenada</StatusLabel>
        <StatusInput $w={124} $pl={6}>5000083.4,2743956.5</StatusInput>
        <StatusIcon $w={24}><Svg s={18} vb="0 0 18 18"><path d="M3 2l12 14M15 2 3 16" stroke="#555" strokeWidth="1.6" /><circle cx="9" cy="9" r="5" stroke="#444" strokeWidth="1.6" strokeDasharray="2 1" /><path d="M12 1l3 3" stroke="#222" strokeWidth="2" /></Svg></StatusIcon>
        <StatusLabel $w={35} $ml={8}>Escala</StatusLabel>
        <StatusInput $w={82}>1:1760<ComboEnd /></StatusInput>
        <StatusIcon $w={32}><Svg s={16} vb="0 0 16 16"><path d="M5 7V4a3 3 0 0 1 6 0v3" stroke="#777" strokeWidth="1.6" /><rect x="3" y="7" width="10" height="8" rx="1" fill="#6c6e6c" /></Svg></StatusIcon>
        <StatusLabel $w={63}>Amplificador</StatusLabel>
        <StatusInput $w={88}>100%<SpinArrows /></StatusInput>
        <StatusLabel $w={52} $ml={8}>Rotación</StatusLabel>
        <StatusInput $w={85}>0,0 °<SpinArrows /></StatusInput>
        <CheckBox>✓</CheckBox>
        <StatusLabel $w={74}>Representar</StatusLabel>
        <StatusIcon $w={25}><Svg s={16} vb="0 0 16 16"><circle cx="8" cy="8" r="7" fill="#9fa39c" /><path d="M1 8h14M8 1c-4 4-4 10 0 14M8 1c4 4 4 10 0 14M2 4h12M2 12h12" stroke="#eef0ea" strokeWidth=".8" /></Svg></StatusIcon>
        <StatusLabel $w={32}>EPSG:</StatusLabel>
      </StatusBar>

      <Taskbar>
        <TaskButton>{Task.mail}</TaskButton>
        <TaskButton>{Task.chrome}</TaskButton>
        <TaskButton>{Task.word}</TaskButton>
        <TaskButton>{Task.search}</TaskButton>
        <TaskButton>{Task.note}</TaskButton>
        <TaskButton>{Task.any}</TaskButton>
        <TaskButton>{Task.any}</TaskButton>
        <TaskButton $active $w={48}>{Task.qgis}</TaskButton>
        <Tray>
          <TrayItem $w={24}><Svg s={14} vb="0 0 14 14"><path d="M2 10l5-5 5 5" stroke="#e4e9ee" strokeWidth="1.2" /></Svg></TrayItem>
          <TrayItem $w={26}><Svg s={18} vb="0 0 18 18"><rect x="1" y="2" width="7" height="9" stroke="#e4e9ee" /><path d="M8 4h9v8H8M4 11v4h7M13 12v3" stroke="#e4e9ee" /></Svg></TrayItem>
          <TrayItem $w={22}><Svg s={18} vb="0 0 18 18"><path d="M2 6h3l4-3v12l-4-3H2z" stroke="#e4e9ee" /><path d="M11 6c1 2 1 4 0 6M13 4c2 3 2 7 0 10M15 3c2 4 2 8 0 12" stroke="#e4e9ee" /></Svg></TrayItem>
          <TrayItem $w={38}>ESP</TrayItem>
          <Clock>11:44 a. m.<br />5/11/2020</Clock>
        </Tray>
      </Taskbar>
      <BottomStrip><StripWhite $w={35} /><StripWhite $w={20} /></BottomStrip>

      <Dialog>
        <DialogTitle>
          <Svg s={18} vb="0 0 18 18"><circle cx="8.5" cy="8.5" r="6.3" stroke="#83ad24" strokeWidth="2.8" /><path d="M9 9l7 7" stroke="#83ad24" strokeWidth="2.8" /><circle cx="8.5" cy="8.5" r="2" fill="#ee7913" /></Svg>
          <TitleText>Lindero - Atributos del objeto espacial</TitleText>
          <CloseX><svg width="14" height="14" viewBox="0 0 14 14"><path d="M2 2l10 10M12 2 2 12" stroke="#3a3a3a" strokeWidth="1.2" /></svg></CloseX>
        </DialogTitle>
        <DialogBody>
          <Row>
            <Label>Versión de comienzo de vida útil</Label>
            <Field $w={400} $pl={3}><FieldValue>5/11/20 11:43</FieldValue><Clear /><FieldCombo /></Field>
            <Ok />
          </Row>
          <Row $mt={54}>
            <Label>Espacio de nombres</Label>
            <Field $w={400}><FieldValue $tight>FAO_LC_LINDERO</FieldValue><Clear /></Field>
            <Ok />
          </Row>
          <Row $mt={54}>
            <Label>Versión de fin de vida útil</Label>
            <Field $w={406} $off><FieldValue $tight>NULL</FieldValue><FieldCombo /></Field>
          </Row>
          <Row $mt={73}>
            <Label>Local ID</Label>
            <Field $w={400} $focus><FieldValue $caret>44650<i /></FieldValue><Clear /></Field>
            <Ok />
          </Row>
          <Row $mt={55}>
            <Label>Localización textual</Label>
            <Field $w={406} $off><FieldValue $italic $tight>NULL</FieldValue></Field>
          </Row>
          <Row $mt={54}>
            <Label>Longitud [m]</Label>
            <Field $w={400}><FieldValue $right>10000,0</FieldValue><Clear ml={7} mr={5} /><SpinArrows /></Field>
            <Ok />
          </Row>
          <DialogButtons>
            <DlgButton $primary>Aceptar</DlgButton>
            <DlgButton>Cancelar</DlgButton>
          </DialogButtons>
        </DialogBody>
      </Dialog>
    </Page>
  );
}
